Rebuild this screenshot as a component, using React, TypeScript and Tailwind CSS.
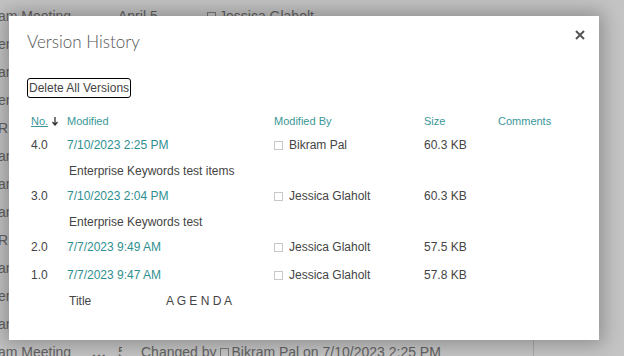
import React from 'react';

const bgLabels = ['em', 'am', 'em', 'R', 'am', 'am', 'am', 'R', 'am', 'em', 'am'];

type Version = {
  no: string;
  modified: string;
  by: string;
  size: string;
  rowH: string;
  comment?: React.ReactNode;
};

const versions: Version[] = [
  {
    no: '4.0',
    modified: '7/10/2023 2:25 PM',
    by: 'Bikram Pal',
    size: '60.3 KB',
    rowH: 'h-[25px]',
    comment: <span>Enterprise Keywords test items</span>,
  },
  {
    no: '3.0',
    modified: '7/10/2023 2:04 PM',
    by: 'Jessica Glaholt',
    size: '60.3 KB',
    rowH: 'h-[25px]',
    comment: <span>Enterprise Keywords test</span>,
  },
  {
    no: '2.0',
    modified: '7/7/2023 9:49 AM',
    by: 'Jessica Glaholt',
    size: '57.5 KB',
    rowH: 'h-[28px]',
  },
  {
    no: '1.0',
    modified: '7/7/2023 9:47 AM',
    by: 'Jessica Glaholt',
    size: '57.8 KB',
    rowH: 'h-[25px]',
    comment: (
      <span className="flex">
        <span className="w-[97px]">Title</span>
        <span>A G E N D A</span>
      </span>
    ),
  },
];

function Box({ className = '' }: { className?: string }) {
  return <span className={`inline-block h-[9px] w-[9px] shrink-0 border ${className}`} />;
}

function Background() {
  return (
    <div className="flex flex-col pt-[2px] text-[14px] text-[#626262]">
      {/* top row */}
      <div className="flex h-[28px] items-center">
        <span className="w-[118px] shrink-0 -translate-x-[2px]">am Meeting</span>
        <span className="w-[89px] shrink-0">April 5</span>
        <Box className="mr-[3px] border-[#7a7a7a]" />
        <span>Jessica Glaholt</span>
      </div>
      {bgLabels.map((l, i) => (
        <div key={i} className="flex h-[28px] items-center">
          <span className="-translate-x-[2px]">{l}</span>
        </div>
      ))}
      {/* bottom row */}
      <div className="flex h-[28px] items-center">
        <span className="w-[92px] shrink-0 -translate-x-[2px]">am Meeting</span>
        <span className="w-[26px] shrink-0 font-bold tracking-[1px]">...</span>
        <span className="w-[4px] shrink-0 overflow-hidden">5</span>
        <span className="ml-[19px] flex items-center">
          Changed by
          <Box className="mx-[3px] border-[#7a7a7a]" />
          Bikram Pal on 7/10/2023 2:25 PM
        </span>
        <span className="ml-auto mr-[90px] h-[28px] w-px bg-[#a8a8a8]" />
      </div>
    </div>
  );
}

export default function App() {
  return (
    <div
      className="relative h-[356px] w-[624px] overflow-hidden bg-[#c4c4c4]"
      style={{ fontFamily: '"Liberation Sans", Arial, sans-serif' }}
    >
      <Background />

      {/* Dialog */}
      <div className="absolute left-[9px] top-[16px] h-[324px] w-[590px] bg-white px-[18px] pt-[12px] shadow-[0_0_18px_4px_rgba(0,0,0,0.28)]">
        <div className="flex items-start justify-between">
          <h1
            className="text-[17px] font-light leading-[28px] text-[#555]"
            style={{ fontFamily: 'Lato, "Liberation Sans", sans-serif' }}
          >
            Version History
          </h1>
          <button className="mr-[-4px] mt-[2px] text-[#555]">
            <svg width="10" height="10" viewBox="0 0 10 10">
              <path d="M1 1 L9 9 M9 1 L1 9" stroke="currentColor" strokeWidth="2" />
            </svg>
          </button>
        </div>

        <button className="mt-[22px] flex h-[20px] items-center rounded-[3px] border-[1.5px] border-black px-[1px] text-[12px] text-[#444]">
          Delete All Versions
        </button>

        <div className="mt-[12px] text-[12px] text-[#444]">
          {/* header */}
          <div className="flex h-[22px] items-center pl-[4px] text-[11px] text-[#3a9797]">
            <span className="flex w-[36px] shrink-0 items-center">
              <span className="underline">No.</span>
              <svg width="6" height="9" viewBox="0 0 6 9" className="ml-[4px] text-[#333]">
                <path d="M3 0 V7 M0.5 5 L3 8 L5.5 5" stroke="currentColor" strokeWidth="1.3" fill="none" />
              </svg>
            </span>
            <span className="w-[207px] shrink-0">Modified</span>
            <span className="w-[150px] shrink-0">Modified By</span>
            <span className="w-[74px] shrink-0">Size</span>
            <span>Comments</span>
          </div>

          {versions.map((v) => (
            <div key={v.no}>
              <div className={`flex ${v.rowH} items-start pl-[4px] pt-[4px]`}>
                <span className="w-[36px] shrink-0">{v.no}</span>
                <span className="w-[207px] shrink-0 text-[#2f8f8f]">{v.modified}</span>
                <span className="flex w-[150px] shrink-0 items-center">
                  <Box className="mr-[6px] border-[#c8c8c8]" />
                  {v.by}
                </span>
                <span className="w-[74px] shrink-0">{v.size}</span>
              </div>
              {v.comment && (
                <div className="flex h-[26px] items-center pl-[42px] pt-[2px]">{v.comment}</div>
              )}
            </div>
          ))}
        </div>
      </div>
    </div>
  );
}
